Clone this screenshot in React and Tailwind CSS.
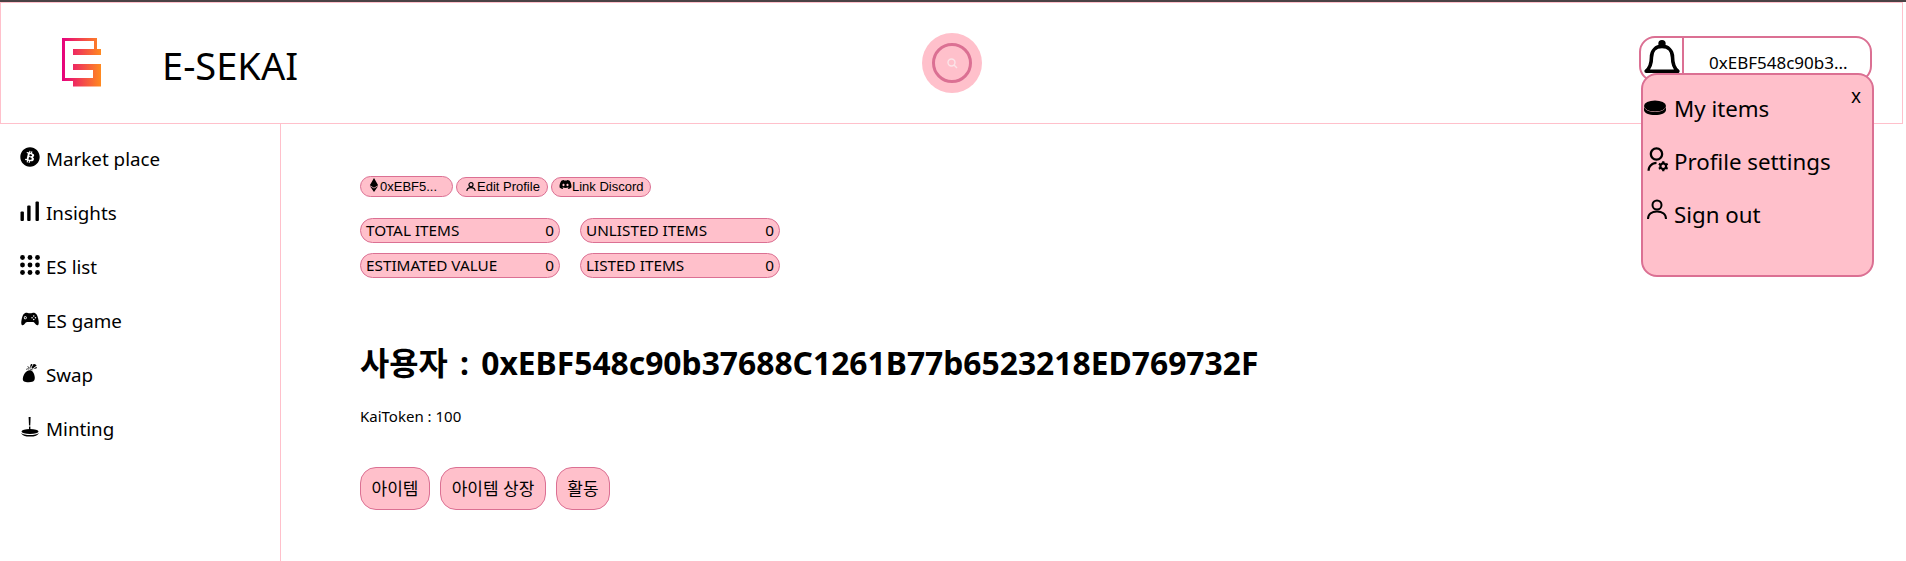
import { FaBitcoin, FaEthereum, FaDiscord } from "react-icons/fa";
import { IoLogoGameControllerB } from "react-icons/io";
import { GiSwapBag } from "react-icons/gi";
import { RiUserSettingsLine } from "react-icons/ri";

function BarsIcon() {
  return (
    <svg width="20" height="20" viewBox="0 0 20 20">
      <rect x="0.5" y="10.5" width="3.4" height="9.5" rx="1" />
      <rect x="7.2" y="4.5" width="3.4" height="15.5" rx="1" />
      <rect x="15.5" y="0.5" width="3.4" height="19.5" rx="1" />
    </svg>
  );
}

function DotsIcon() {
  return (
    <svg width="20" height="20" viewBox="0 0 20 20">
      {[2.5, 10, 17.5].map((cy) =>
        [2.5, 10, 17.5].map((cx) => <circle key={`${cx}-${cy}`} cx={cx} cy={cy} r="2.4" />)
      )}
    </svg>
  );
}

function MintIcon() {
  return (
    <svg width="20" height="20" viewBox="0 0 20 20">
      <path d="M8.6 0h2l-.3 8.5H9z" />
      <rect x="9" y="9.5" width="1.4" height="4" />
      <ellipse cx="10" cy="14.5" rx="8.5" ry="2.4" />
      <path d="M1 16c1 2.5 4 3.6 9 3.6s8-1.1 9-3.6c-2 1.5-5 2-9 2s-7-.5-9-2z" />
    </svg>
  );
}

function PersonIcon({ size = 22, strokeWidth = 2 }) {
  return (
    <svg width={size} height={size} viewBox="0 0 22 22" fill="none" stroke="currentColor" strokeWidth={strokeWidth}>
      <circle cx="11" cy="6" r="4.5" />
      <path d="M2 20c0-5 4-7.5 9-7.5s9 2.500 9 7.500" />
    </svg>
  );
}

function BellIcon() {
  return (
    <svg width="38" height="35" viewBox="0 0 36 33" fill="none" stroke="currentColor" strokeWidth="3.4" strokeLinejoin="round">
      <circle cx="18" cy="3.500" r="1.800" />
      <path d="M3 29.500c3.500-3 5-7 5-13 0-7 4.500-10.500 10-10.500s10 3.500 10 10.500c0 6 1.500 10 5 13z" />
    </svg>
  );
}

function CoinIcon() {
  return (
    <svg width="22" height="16" viewBox="0 0 22 16">
      <ellipse cx="11" cy="6" rx="11" ry="5.5" />
      <path d="M0 7v3c0 3 5 5 11 5s11-2 11-5V7c-1 3-6 5-11 5S1 10 0 7z" />
    </svg>
  );
}

function Logo() {
  return (
    <svg width="40" height="50" viewBox="0 0 40 50">
      <defs>
        <linearGradient id="logoGrad" gradientUnits="userSpaceOnUse" x1="0" y1="0" x2="39" y2="0">
          <stop offset="0" stopColor="#e6007e" />
          <stop offset="1" stopColor="#ff8a1f" />
        </linearGradient>
      </defs>
      <path
        d="M0 0H35V11H32V3H3V40H11V43H0Z M11 11H39V17H11Z M11 26H39V48.500H11V40H31V32H11Z"
        fill="url(#logoGrad)"
      />
    </svg>
  );
}

const sideItems = [
  { label: "Market place", icon: <FaBitcoin size={20} /> },
  { label: "Insights", icon: <BarsIcon /> },
  { label: "ES list", icon: <DotsIcon /> },
  { label: "ES game", icon: <IoLogoGameControllerB size={20} /> },
  { label: "Swap", icon: <GiSwapBag size={20} /> },
  { label: "Minting", icon: <MintIcon /> },
];

const stats = [
  { label: "TOTAL ITEMS", value: 0 },
  { label: "UNLISTED ITEMS", value: 0 },
  { label: "ESTIMATED VALUE", value: 0 },
  { label: "LISTED ITEMS", value: 0 },
];

export default function App() {
  return (
    <div className="h-[561px] overflow-hidden bg-white text-black border-t-2 border-[#4a4245] font-['Noto_Sans','Noto_Sans_CJK_KR',sans-serif]">
      {/* Header */}
      <header className="relative w-[1903px] h-[122px] flex items-center border border-[#ffc0cb]">
        <div className="ml-[61px] flex items-center">
          <Logo />
          <span className="ml-[60px] mt-[3px] text-[38px] leading-none">E-SEKAI</span>
        </div>
        <div className="absolute left-[921px] top-[30px] size-[60px] rounded-full bg-[#ffc0cb] flex items-center justify-center">
          <div className="size-[40px] rounded-full border-[3px] border-[#db7093] flex items-center justify-center">
            <svg width="11" height="11" viewBox="0 0 11 11" fill="none" stroke="#fbe4e8" strokeWidth="1.4">
              <circle cx="4.5" cy="4.5" r="3.5" />
              <path d="M7 7l3 3" />
            </svg>
          </div>
        </div>
        <div className="absolute left-[1638px] top-[33px] w-[233px] h-[46px] rounded-2xl border-2 border-[#db7093] flex overflow-hidden">
          <div className="w-[43px] shrink-0 border-r-2 border-[#db7093] flex justify-center pt-[2px]">
            <BellIcon />
          </div>
          <span className="ml-[25px] text-[17px] mt-[15px] leading-5">0xEBF548c90b3...</span>
        </div>
        {/* Account menu */}
        <div className="absolute left-[1640px] top-[70px] w-[233px] h-[204px] rounded-2xl border-2 border-[#db7093] bg-[#ffc0cb] z-10">
          <span className="absolute right-[11px] top-[11px] text-[19px] leading-5">x</span>
          <div className="flex flex-col gap-[21px] pt-[18px]">
            <div className="flex items-start h-[32px]">
              <span className="w-[31px] pt-[7px] pl-px"><CoinIcon /></span>
              <span className="text-[22.300px] leading-8">My items</span>
            </div>
            <div className="flex items-start h-[32px]">
              <span className="w-[31px]"><RiUserSettingsLine size={27} /></span>
              <span className="text-[22.300px] leading-8">Profile settings</span>
            </div>
            <div className="flex items-start h-[32px]">
              <span className="w-[31px] pl-[3px]"><PersonIcon /></span>
              <span className="text-[22.300px] leading-8">Sign out</span>
            </div>
          </div>
        </div>
      </header>

      <div className="flex h-[437px]">
        {/* Sidebar */}
        <aside className="w-[281px] shrink-0 border-r border-[#ffc0cb] pl-5 pt-[20px] flex flex-col gap-[24px]">
          {sideItems.map((item) => (
            <div key={item.label} className="flex items-start h-[30px]">
              <span className="w-[26px] pt-[3px]">{item.icon}</span>
              <span className="text-[18.800px] leading-[30px]">{item.label}</span>
            </div>
          ))}
        </aside>

        {/* Profile */}
        <main className="pl-[79px] pt-[52px]">
          <div className="flex items-center gap-[3px] font-['Liberation_Sans',sans-serif] text-[13px] leading-none">
            <span className="w-[93px] h-[21px] rounded-full border border-[#db7093] bg-[#ffc0cb] flex items-center pl-[7px]">
              <FaEthereum size={14} className="-mt-1 -ml-px -mr-px" />
              <span>0xEBF5...</span>
            </span>
            <span className="w-[92px] h-[20px] rounded-full border border-[#db7093] bg-[#ffc0cb] flex items-center pl-[9px]">
              <PersonIcon size={10} strokeWidth={2.500} />
              <span className="ml-px">Edit Profile</span>
            </span>
            <span className="w-[100px] h-[20px] rounded-full border border-[#db7093] bg-[#ffc0cb] flex items-center pl-[7px]">
              <FaDiscord size={13} className="-mt-1" />
              <span>Link Discord</span>
            </span>
          </div>

          <div className="mt-[21px] grid grid-cols-[200px_200px] gap-x-5 gap-y-[10px] w-[420px]">
            {stats.map((s) => (
              <div key={s.label} className="h-[25px] rounded-full border border-[#db7093] bg-[#ffc0cb] flex items-center justify-between px-[5px] text-[15.300px]">
                <span>{s.label}</span>
                <span>{s.value}</span>
              </div>
            ))}
          </div>

          <h1 className="mt-[63px] text-[31.800px] leading-[44px] font-bold whitespace-nowrap [word-spacing:4px]">
            사용자 : 0xEBF548c90b37688C1261B77b6523218ED769732F
          </h1>
          <p className="mt-[21px] text-[15px] leading-5">KaiToken : 100</p>

          <div className="mt-[41px] flex gap-[10px]">
            <button className="w-[70px] h-[43px] rounded-2xl border border-[#db7093] bg-[#ffc0cb] text-[17px]">아이템</button>
            <button className="w-[106px] h-[43px] rounded-2xl border border-[#db7093] bg-[#ffc0cb] text-[17px]">아이템 상장</button>
            <button className="w-[54px] h-[43px] rounded-2xl border border-[#db7093] bg-[#ffc0cb] text-[17px]">활동</button>
          </div>
        </main>
      </div>
    </div>
  );
}
